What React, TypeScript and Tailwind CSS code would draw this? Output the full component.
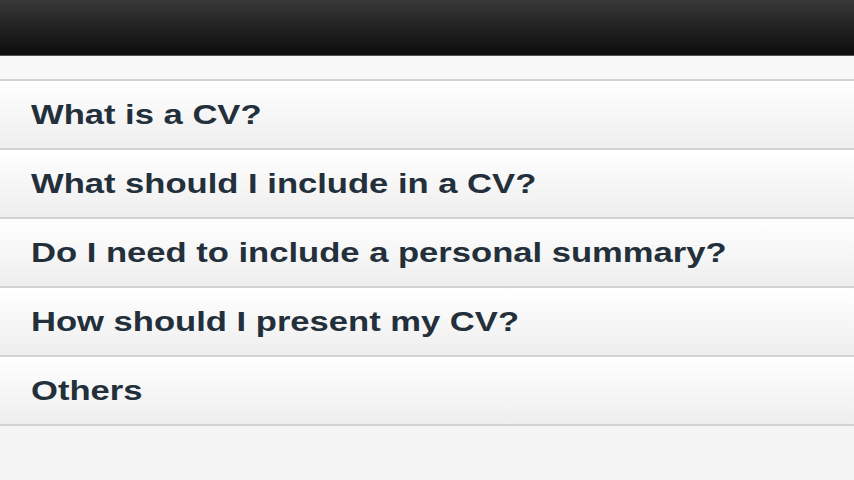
import React from "react";

const items = [
  "What is a CV?",
  "What should I include in a CV?",
  "Do I need to include a personal summary?",
  "How should I present my CV?",
  "Others",
];

export default function App() {
  return (
    <div
      className="w-[854px] h-[480px] overflow-hidden bg-[#f4f4f4] flex flex-col"
      style={{ fontFamily: '"Liberation Sans", Arial, sans-serif' }}
    >
      <div className="h-[56px] shrink-0 bg-gradient-to-b from-[#383838] to-[#0e0e0e] border-b border-[#555555]" />
      <div className="h-[23px] shrink-0 bg-[#f8f8f8]" />
      <ul className="flex flex-col border-b-2 border-[#d2d2d2]">
        {items.map((t) => (
          <li
            key={t}
            className="h-[69px] border-t-2 border-[#d2d2d2] bg-gradient-to-b from-[#ffffff] to-[#eeeeee] flex items-center pl-[31px]"
          >
            <span className="inline-block origin-left scale-x-[1.235] text-[28px] font-bold text-[#23303b] leading-none">
              {t}
            </span>
          </li>
        ))}
      </ul>
    </div>
  );
}
